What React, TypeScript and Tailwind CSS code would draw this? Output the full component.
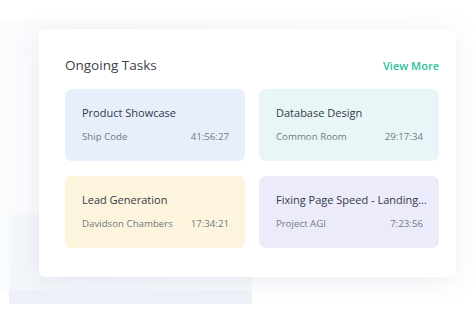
import React from "react";

const tasks = [
  { title: "Product Showcase", sub: "Ship Code", time: "41:56:27", bg: "bg-[#e7eefc]" },
  { title: "Database Design", sub: "Common Room", time: "29:17:34", bg: "bg-[#e9f6f7]" },
  { title: "Lead Generation", sub: "Davidson Chambers", time: "17:34:21", bg: "bg-[#fcf4dd]" },
  { title: "Fixing Page Speed - Landing...", sub: "Project AGI", time: "7:23:56", bg: "bg-[#ebebfb]" },
];

export default function App() {
  return (
    <div
      className="relative w-[474px] h-[317px] bg-white overflow-hidden"
      style={{ fontFamily: '"Open Sans", "Noto Sans", sans-serif' }}
    >
      <div className="absolute left-[9px] top-[215px] w-[243px] h-[89px] bg-[#eef2f8]" />
      <div className="absolute left-0 top-[20px] w-[474px] h-[270px] bg-gradient-to-r from-[#f6f8fb] to-white opacity-60" />
      <div className="relative ml-[39px] mt-[29px] w-[417px] h-[248px] bg-white rounded-[6px] shadow-[0_4px_24px_rgba(150,165,190,0.18)] pl-[26px] pr-[17px] pt-[26px]">
        <div className="flex items-center justify-between h-[20px]">
          <span className="text-[13.5px] text-[#3a3f4b]">Ongoing Tasks</span>
          <span className="text-[11px] font-semibold text-[#2cbfa2] pt-[2px]">View More</span>
        </div>
        <div className="grid grid-cols-[180px_180px] gap-x-[14px] gap-y-[15px] mt-[14px]">
          {tasks.map((t) => (
            <div key={t.title} className={`${t.bg} rounded-[7px] h-[72px] pl-[17px] pr-[16px] pt-[16px]`}>
              <div className="text-[11px] text-[#343a46] leading-[16px] whitespace-nowrap">{t.title}</div>
              <div className="flex justify-between text-[9.7px] text-[#737985] mt-[9px] leading-[14px]">
                <span>{t.sub}</span>
                <span>{t.time}</span>
              </div>
            </div>
          ))}
        </div>
      </div>
    </div>
  );
}
